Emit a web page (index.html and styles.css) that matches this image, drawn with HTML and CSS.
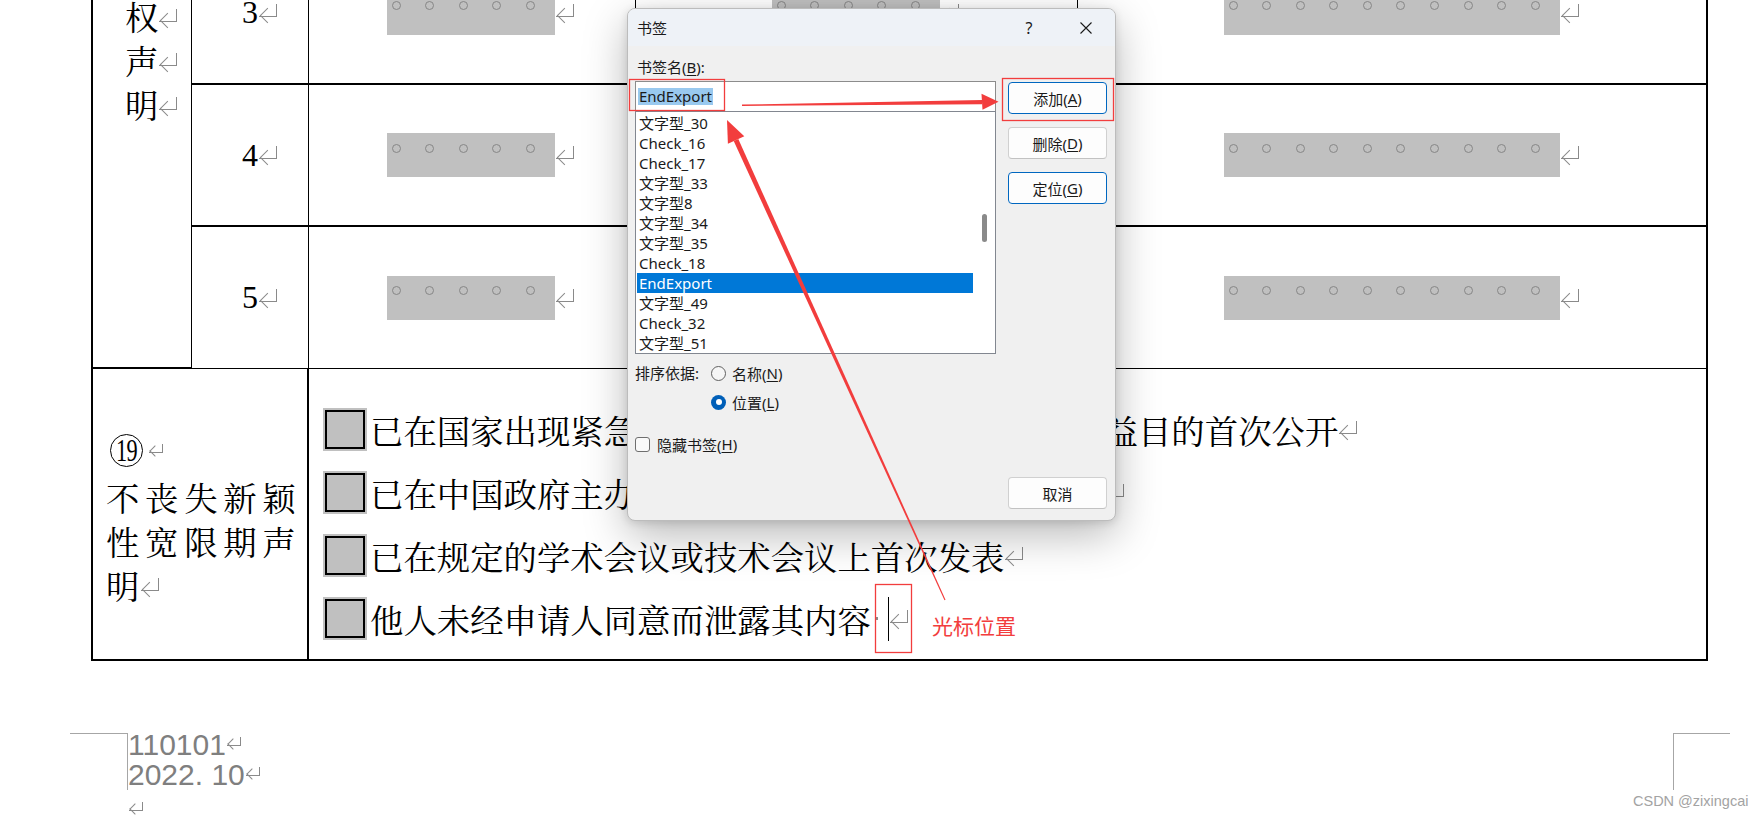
FILE: index.html
```html
<!DOCTYPE html>
<html>
<head>
  <meta charset="utf-8">
  <title>书签</title>
  <link rel="stylesheet" href="styles.css">
</head>
<body>
<div class="page">
  <!-- form table (top rows are scrolled off) -->
  <div class="form">
    <div class="cell side">
      <div>权<span class="pm"></span></div>
      <div>声<span class="pm"></span></div>
      <div>明<span class="pm"></span></div>
    </div>

    <div class="cell num">3<span class="pm"></span></div>
    <div class="cell fc c"><span class="fld"><i></i><i></i><i></i><i></i><i></i></span><span class="pm"></span></div>
    <div class="cell fc d"><span class="fld"><i></i><i></i><i></i><i></i><i></i></span><span class="pm"></span></div>
    <div class="cell fc e"><span class="fld"><i></i><i></i><i></i><i></i><i></i><i></i><i></i><i></i><i></i><i></i></span><span class="pm"></span></div>

    <div class="cell num">4<span class="pm"></span></div>
    <div class="cell fc c"><span class="fld"><i></i><i></i><i></i><i></i><i></i></span><span class="pm"></span></div>
    <div class="cell fc d"><span class="fld"><i></i><i></i><i></i><i></i><i></i></span><span class="pm"></span></div>
    <div class="cell fc e"><span class="fld"><i></i><i></i><i></i><i></i><i></i><i></i><i></i><i></i><i></i><i></i></span><span class="pm"></span></div>

    <div class="cell num last">5<span class="pm"></span></div>
    <div class="cell fc c last"><span class="fld"><i></i><i></i><i></i><i></i><i></i></span><span class="pm"></span></div>
    <div class="cell fc d last"><span class="fld"><i></i><i></i><i></i><i></i><i></i></span><span class="pm"></span></div>
    <div class="cell fc e last"><span class="fld"><i></i><i></i><i></i><i></i><i></i><i></i><i></i><i></i><i></i><i></i></span><span class="pm"></span></div>

    <div class="cell grace">
      <div class="g-no"><span class="circ"><b>19</b></span><span class="pm sm"></span></div>
      <div class="g-txt">不丧失新颖性宽限期声明<span class="pm"></span></div>
    </div>
    <div class="cell opts">
      <div class="opt"><span class="cb"></span>已在国家出现紧急状态或者非常情况时，为公共利益目的首次公开<span class="pm"></span></div>
      <div class="opt"><span class="cb"></span>已在中国政府主办或承认的国际展览会上首次展出<span class="pm"></span></div>
      <div class="opt"><span class="cb"></span>已在规定的学术会议或技术会议上首次发表<span class="pm"></span></div>
      <div class="opt"><span class="cb"></span>他人未经申请人同意而泄露其内容<span class="sp"></span><span class="caret"></span><span class="pm"></span></div>
    </div>
  </div>

  <div class="foot">
    <div class="crop l"></div>
    <div class="foot-txt">
      <div>110101<span class="pm sm"></span></div>
      <div>2022. 10<span class="pm sm"></span></div>
      <div><span class="pm sm low"></span></div>
    </div>
    <div class="crop r"></div>
  </div>

  <!-- Word bookmark dialog -->
  <div class="dialog">
    <div class="dlg-title">
      <span class="dlg-name">书签</span>
      <span class="tb-btn help">?</span>
      <span class="tb-btn">
        <svg width="12" height="12" viewBox="0 0 12 12"><path d="M0.5 0.5 L11.5 11.5 M11.5 0.5 L0.5 11.5" stroke="#1a1a1a" stroke-width="1.1" fill="none"/></svg>
      </span>
    </div>
    <div class="dlg-body">
      <div class="dlg-left">
        <div class="lbl">书签名(<u>B</u>):</div>
        <div class="edit"><span class="sel">EndExport</span></div>
        <div class="list">
          <div class="items">
            <div class="item">文字型_30</div>
            <div class="item">Check_16</div>
            <div class="item">Check_17</div>
            <div class="item">文字型_33</div>
            <div class="item">文字型8</div>
            <div class="item">文字型_34</div>
            <div class="item">文字型_35</div>
            <div class="item">Check_18</div>
            <div class="item on">EndExport</div>
            <div class="item">文字型_49</div>
            <div class="item">Check_32</div>
            <div class="item">文字型_51</div>
          </div>
          <div class="vscroll"><span class="thumb"></span></div>
        </div>
        <div class="sort">
          <span class="sort-lbl">排序依据:</span>
          <div class="radios">
            <div class="radio"><span class="rb"></span>名称(<u>N</u>)</div>
            <div class="radio"><span class="rb on"></span>位置(<u>L</u>)</div>
          </div>
        </div>
        <div class="hide"><span class="chk"></span>隐藏书签(<u>H</u>)</div>
      </div>
      <div class="dlg-right">
        <div class="btn blue">添加(<u>A</u>)</div>
        <div class="btn">删除(<u>D</u>)</div>
        <div class="btn blue">定位(<u>G</u>)</div>
        <div class="btn cancel">取消</div>
      </div>
    </div>
  </div>

  <!-- red annotations -->
  <svg class="marks" width="1758" height="819" viewBox="0 0 1758 819">
    <g fill="#f23d3d">
      <polygon points="742,104.6 982,100 982,104.2 742,106"/>
      <polygon points="998.5,101.7 981.5,93.8 982.5,109.8"/>
      <polygon points="945.5,599.8 738.3,139 733.7,141 944.5,600.2"/>
      <polygon points="727,120 744.3,136.3 727.9,143.7"/>
    </g>
    <g fill="none" stroke="#f23d3d" stroke-width="1.3">
      <rect x="629.5" y="79.5" width="95" height="31"/>
      <rect x="1002.5" y="78.5" width="111" height="42"/>
      <rect x="875.5" y="584.5" width="36" height="68"/>
    </g>
  </svg>
  <div class="note">光标位置</div>
  <div class="wm">CSDN @zixingcai</div>
</div>
</body>
</html>
```

FILE: styles.css
```css
* {
  box-sizing: border-box;
}

body {
  margin: 0;
  background: #fff;
}

.page {
  position: relative;
  width: 1758px;
  height: 819px;
  overflow: hidden;
  font-family: "Noto Serif CJK SC", "Noto Sans CJK SC", serif;
  color: #000;
}

/* ---- form table ---- */
.form {
  display: grid;
  grid-template-columns: 99px 117px 327px 442px 630px;
  grid-template-rows: 143px 142px 142px 292px;
  width: fit-content;
  margin: -58px 0 0 91px;
  border-left: 2px solid #000;
}

.cell {
  border-right: 1px solid #000;
  border-bottom: 2px solid #000;
}

.cell.e {
  border-right-width: 2px;
}

.cell.last {
  border-bottom-width: 1px;
}

.side {
  grid-row: 1 / 4;
  padding: 52px 0 0 32px;
  font-size: 33.4px;
  line-height: 44px;
}

.num {
  display: flex;
  align-items: center;
  justify-content: center;
  padding-left: 20px;
  font: 32px "Liberation Serif", serif;
}

.fc {
  display: flex;
  align-items: center;
}

.fc.c { padding-left: 78px; }
.fc.d { padding-left: 136px; }
.fc.e { padding-left: 146px; }

.fld {
  display: flex;
  height: 44px;
  background: #c0c0c0;
}

.fld i {
  position: relative;
  width: 33.6px;
}

.fld i::before {
  content: "";
  position: absolute;
  left: 4.5px;
  top: 10.5px;
  width: 7px;
  height: 7px;
  border: 1.3px solid #868686;
  border-radius: 50%;
}

/* paragraph mark */
.pm {
  --w: 20px;
  --h: 18px;
  --y: 12px;
  --a: 10px;
  display: inline-block;
  position: relative;
  flex-shrink: 0;
  width: var(--w);
  height: var(--h);
  vertical-align: 3px;
}

.pm::before {
  content: "";
  position: absolute;
  right: 1px;
  top: 0;
  width: calc(var(--w) - 3px);
  height: var(--y);
  border-right: 1.4px solid #8a8a8a;
  border-bottom: 1.4px solid #8a8a8a;
}

.pm::after {
  content: "";
  position: absolute;
  width: var(--a);
  height: var(--a);
  left: calc(1.5px + var(--a) * 0.207);
  top: calc(var(--y) - var(--a) / 2 - 0.7px);
  border-left: 1.4px solid #8a8a8a;
  border-bottom: 1.4px solid #8a8a8a;
  transform: rotate(45deg);
}

.pm.sm {
  --w: 16px;
  --h: 13px;
  --y: 8px;
  --a: 7px;
  vertical-align: 5px;
}

.pm.low {
  vertical-align: 0;
}

/* grace period row */
.grace {
  grid-column: 1 / 3;
  border-right-width: 2px;
  padding: 56px 0 0 13px;
  font-size: 33.4px;
}

.g-no {
  display: flex;
  align-items: center;
  height: 50px;
  padding-left: 4px;
}

.circ {
  display: flex;
  align-items: center;
  justify-content: center;
  width: 33px;
  height: 33px;
  border: 1.3px solid #000;
  border-radius: 50%;
  margin-right: 5px;
}

.circ b {
  display: block;
  font: 400 31px/1 "Liberation Serif", serif;
  letter-spacing: -1px;
  transform: scaleX(0.72);
  margin-top: 1px;
}

.g-txt {
  line-height: 44px;
  letter-spacing: 5.7px;
}

.g-txt .pm {
  margin-left: -5px;
}

.opts {
  grid-column: 3 / 6;
  border-right-width: 2px;
  padding: 29px 0 0 14px;
  font-size: 33.4px;
}

.opt {
  display: flex;
  align-items: center;
  height: 63px;
  white-space: nowrap;
}

.cb {
  width: 40px;
  height: 39px;
  margin: 0 5px 0 2px;
  border: 2px solid #000;
  background: #c0c0c0;
  box-shadow: 0 0 0 2px #c0c0c0;
  flex-shrink: 0;
}

.sp {
  position: relative;
  width: 17px;
  height: 4px;
  flex-shrink: 0;
}

.sp::before {
  content: "";
  position: absolute;
  left: 4px;
  top: 0;
  width: 3.5px;
  height: 3.5px;
  background: #8a8a8a;
}

.caret {
  width: 1.6px;
  height: 44px;
  background: #000;
  flex-shrink: 0;
}

/* footer block with crop marks */
.foot {
  display: flex;
  width: 1660px;
  margin: 72px 0 0 70px;
}

.crop {
  width: 58px;
  height: 57px;
  border-top: 1px solid #a6a6a6;
}

.crop.l {
  border-right: 1px solid #a6a6a6;
}

.crop.r {
  width: 57px;
  margin-left: auto;
  border-left: 1px solid #a6a6a6;
}

.foot-txt {
  margin-top: -3.4px;
  font: 30px/30px "Liberation Sans", Arial, sans-serif;
  color: #7f7f7f;
}

/* ---- dialog ---- */
.dialog {
  position: absolute;
  left: 627px;
  top: 8px;
  z-index: 2;
  width: 489px;
  height: 513px;
  display: flex;
  flex-direction: column;
  background: #f0f0f0;
  border: 1px solid #bcbcbc;
  border-radius: 8px;
  overflow: hidden;
  box-shadow: 0 14px 44px rgba(0, 0, 0, 0.28), 0 2px 8px rgba(0, 0, 0, 0.12);
  font: 15px "Noto Sans", "Noto Sans CJK SC", sans-serif;
  color: #1a1a1a;
}

.dialog u {
  text-decoration-thickness: 1px;
  text-underline-offset: 2px;
}

.dlg-title {
  display: flex;
  align-items: center;
  height: 37px;
  padding: 0 6px 0 9px;
  background: #eef2f7;
}

.dlg-name {
  flex: 1;
}

.tb-btn {
  display: flex;
  align-items: center;
  justify-content: center;
  width: 46px;
  height: 37px;
}

.tb-btn.help {
  margin-right: 11px;
  font-size: 16px;
}

.dlg-body {
  flex: 1;
  display: flex;
  gap: 12px;
  padding: 11px 8px 11px 7px;
}

.dlg-left {
  width: 361px;
}

.lbl {
  height: 20px;
  line-height: 20px;
  margin-bottom: 4px;
  padding-left: 2px;
}

.edit {
  height: 30px;
  padding: 4px 0 0 2px;
  background: #fff;
  border: 1px solid #8c8c8c;
  border-bottom: 0;
}

.sel {
  display: inline-block;
  padding: 0 1px;
  line-height: 17px;
  background: #99c9ef;
}

.list {
  display: flex;
  height: 243px;
  background: #fff;
  border: 1px solid #828790;
}

.items {
  flex: 1;
  padding: 1px 0 0 1px;
}

.item {
  height: 20px;
  line-height: 20px;
  padding-left: 2px;
  white-space: nowrap;
}

.item.on {
  background: #0078d7;
  color: #fff;
}

.vscroll {
  position: relative;
  width: 22px;
}

.thumb {
  position: absolute;
  left: 9px;
  top: 102px;
  width: 5px;
  height: 28px;
  border-radius: 3px;
  background: #8a8a8a;
}

.sort {
  display: flex;
  margin-top: 9px;
}

.sort-lbl {
  width: 76px;
  line-height: 20px;
}

.radios {
  display: flex;
  flex-direction: column;
  gap: 9px;
}

.radio {
  display: flex;
  align-items: center;
  height: 20px;
}

.rb {
  position: relative;
  width: 15px;
  height: 15px;
  margin-right: 6px;
  border: 1px solid #616161;
  border-radius: 50%;
  background: #f6f6f6;
}

.rb.on {
  border: none;
  background: #005fb8;
}

.rb.on::after {
  content: "";
  position: absolute;
  left: 4.5px;
  top: 4.5px;
  width: 6px;
  height: 6px;
  border-radius: 50%;
  background: #fff;
}

.hide {
  display: flex;
  align-items: center;
  height: 20px;
  margin-top: 22px;
}

.chk {
  width: 15px;
  height: 15px;
  margin-right: 7px;
  border: 1px solid #6e6e6e;
  border-radius: 3px;
  background: #f9f9f9;
}

.dlg-right {
  display: flex;
  flex-direction: column;
  gap: 13px;
  width: 99px;
  padding-top: 25px;
}

.btn {
  display: flex;
  align-items: center;
  justify-content: center;
  height: 32px;
  background: #fdfdfd;
  border: 1px solid #d0d0d0;
  border-bottom-color: #c2c2c2;
  border-radius: 4px;
}

.btn.blue {
  border: 1.5px solid #0067c0;
}

.btn.cancel {
  margin-top: auto;
}

/* ---- annotations ---- */
.marks {
  position: absolute;
  left: 0;
  top: 0;
  z-index: 3;
  pointer-events: none;
}

.note {
  position: absolute;
  left: 932px;
  top: 615px;
  z-index: 3;
  font: 21px/21px "Noto Sans CJK SC", sans-serif;
  color: #f23d3d;
}

.wm {
  position: absolute;
  left: 1633px;
  top: 793px;
  z-index: 3;
  font: 14.5px/16px "Liberation Sans", Arial, sans-serif;
  color: #a3a3a3;
}
```
